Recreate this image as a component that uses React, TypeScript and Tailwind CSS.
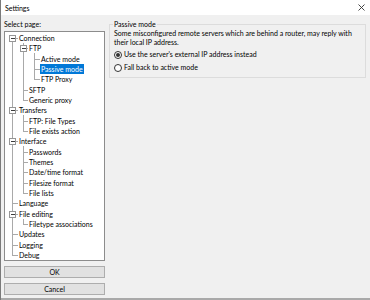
import React from "react";

type Node = { t: string; l: number; e?: boolean; s?: boolean };

const rows: Node[] = [
  { t: "Connection", l: 0, e: true },
  { t: "FTP", l: 1, e: true },
  { t: "Active mode", l: 2 },
  { t: "Passive mode", l: 2, s: true },
  { t: "FTP Proxy", l: 2 },
  { t: "SFTP", l: 1 },
  { t: "Generic proxy", l: 1 },
  { t: "Transfers", l: 0, e: true },
  { t: "FTP: File Types", l: 1 },
  { t: "File exists action", l: 1 },
  { t: "Interface", l: 0, e: true },
  { t: "Passwords", l: 1 },
  { t: "Themes", l: 1 },
  { t: "Date/time format", l: 1 },
  { t: "Filesize format", l: 1 },
  { t: "File lists", l: 1 },
  { t: "Language", l: 0 },
  { t: "File editing", l: 0, e: true },
  { t: "Filetype associations", l: 1 },
  { t: "Updates", l: 0 },
  { t: "Logging", l: 0 },
  { t: "Debug", l: 0 },
];

const ROW = 10.33;
const cols = [7.5, 18.5, 29.5];
const textStart = [13, 23, 35];
const cy = (i: number) => Math.round(6 + ROW * i) + 0.5;

const indent: Record<number, string> = {
  0: "pl-[13px]",
  1: "pl-[23px]",
  2: "pl-[35px]",
};

function TreeLines() {
  const lines: React.ReactNode[] = [];
  const roots = rows.map((r, i) => (r.l === 0 ? i : -1)).filter((i) => i >= 0);
  const stroke = "#a9a9a9";
  lines.push(
    <line key="root" x1={cols[0]} x2={cols[0]} y1={cy(roots[0])} y2={cy(roots[roots.length - 1])} stroke={stroke} />
  );
  rows.forEach((r, i) => {
    if (r.e) {
      let last = i;
      for (let j = i + 1; j < rows.length; j++) {
        if (rows[j].l <= r.l) break;
        if (rows[j].l === r.l + 1) last = j;
      }
      if (last > i) {
        lines.push(
          <line key={"v" + i} x1={cols[r.l + 1]} x2={cols[r.l + 1]} y1={cy(i) + 4} y2={cy(last)} stroke={stroke} />
        );
      }
    }
    lines.push(
      <line key={"h" + i} x1={cols[r.l]} x2={textStart[r.l]} y1={cy(i)} y2={cy(i)} stroke={stroke} />
    );
  });
  rows.forEach((r, i) => {
    if (r.e) {
      const x = cols[r.l];
      const y = cy(i);
      lines.push(
        <g key={"b" + i}>
          <rect x={x - 3} y={y - 3} width={6} height={6} fill="#ffffff" stroke="#969696" />
          <line x1={x - 1.5} x2={x + 2.5} y1={y} y2={y} stroke="#3c3c3c" />
        </g>
      );
    }
  });
  return (
    <svg className="absolute inset-0" width="99" height="228" shapeRendering="crispEdges">
      {lines}
    </svg>
  );
}

function Radio({ checked, label }: { checked?: boolean; label: string }) {
  return (
    <div className="flex items-center h-[10px]">
      <div className="w-[8px] h-[8px] rounded-full border border-[#333333] bg-white flex items-center justify-center">
        {checked && <div className="w-[4px] h-[4px] rounded-full bg-[#333333]" />}
      </div>
      <span className="ml-[2px]">{label}</span>
    </div>
  );
}

export default function App() {
  return (
    <div
      className="w-[370px] h-[300px] bg-[#f0f0f0] text-[7px] text-black flex flex-col border-l border-[#7a7a7a] overflow-hidden"
      style={{ fontFamily: 'Lato, "Noto Sans", sans-serif' }}
    >
      <div className="h-[15px] bg-white flex items-center justify-between pl-[4px] pr-[5px] shrink-0">
        <span className="leading-[10px]">Settings</span>
        <svg width="7" height="7" viewBox="0 0 7 7">
          <path d="M0.5 0.5 L6.5 6.5 M6.5 0.5 L0.5 6.5" stroke="#333" strokeWidth="0.9" fill="none" />
        </svg>
      </div>
      <div className="flex flex-1 min-h-0">
        <div className="w-[101px] ml-[3px] flex flex-col">
          <div className="mt-[4px] h-[10px] leading-[10px]">Select page:</div>
          <div className="mt-[2px] h-[230px] border border-[#8c8c8c] bg-white relative">
            <TreeLines />
            <div className="relative pt-[1px] flex flex-col">
              {rows.map((r, i) => (
                <div key={i} className={"h-[10.33px] flex items-center " + indent[r.l]}>
                  <span
                    className={
                      "px-[1px] leading-[10px] whitespace-nowrap " +
                      (r.s ? "bg-[#0078d7] text-white" : "")
                    }
                  >
                    {r.t}
                  </span>
                </div>
              ))}
            </div>
          </div>
          <button className="mt-[5px] h-[12px] border border-[#adadad] bg-[#e1e1e1] leading-[10px] flex items-center justify-center">
            OK
          </button>
          <button className="mt-[5px] h-[12px] border border-[#adadad] bg-[#e1e1e1] leading-[10px] flex items-center justify-center">
            Cancel
          </button>
        </div>
        <div className="ml-[4px] w-[257px]">
          <fieldset className="mt-[4px] border border-[#dcdcdc] pl-[4px] pr-[2px] pb-[4px]">
            <legend className="leading-[10px] px-[1px] -ml-[1px]">Passive mode</legend>
            <div className="leading-[9px] whitespace-nowrap">
              Some misconfigured remote servers which are behind a router, may reply with
              <br />
              their local IP address.
            </div>
            <div className="mt-[2.5px] flex flex-col gap-[3px]">
              <Radio checked label="Use the server's external IP address instead" />
              <Radio label="Fall back to active mode" />
            </div>
          </fieldset>
        </div>
      </div>
      <div className="h-[2px] bg-[#a9a9a9] shrink-0" />
    </div>
  );
}
